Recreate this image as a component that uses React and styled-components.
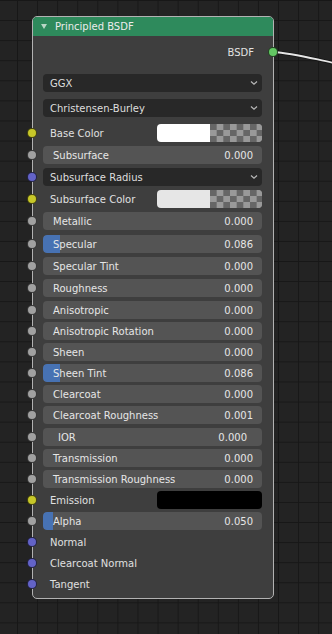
import React from "react";
import styled, { createGlobalStyle } from "styled-components";

const Global = createGlobalStyle`
  html, body { margin: 0; padding: 0; background: #232323; }
  body { font-family: "DejaVu Sans", "Liberation Sans", sans-serif; }
`;

const Canvas = styled.div`
  position: relative;
  width: 332px;
  height: 634px;
  overflow: hidden;
  box-sizing: border-box;
  padding: 16px 0 0 32px;
  background-color: #232323;
  background-image: linear-gradient(to right, #171717 1px, transparent 1px),
    linear-gradient(to bottom, #171717 1px, transparent 1px);
  background-size: 20.08px 20.08px;
  background-position: 17px 0;
`;

const Wire = styled.svg`
  position: absolute;
  left: 0;
  top: 0;
  width: 332px;
  height: 634px;
  pointer-events: none;
  z-index: 0;
`;

const Node = styled.div`
  position: relative;
  z-index: 1;
  width: 242px;
  box-sizing: border-box;
  border: 1px solid #b2b2b2;
  border-radius: 5px;
  background: #3e3e3e;
  padding-bottom: 5px;
  font-size: 10px;
  color: #e2e2e2;
`;

const Header = styled.div`
  height: 19px;
  display: flex;
  align-items: center;
  gap: 8px;
  padding-left: 8px;
  background: #2e8a5c;
  border-radius: 4px 4px 0 0;
  color: #ececec;
`;

const Body = styled.div`
  display: flex;
  flex-direction: column;
  padding: 5px 11px 0 10px;
`;

const OutputRow = styled.div`
  position: relative;
  height: 22px;
  display: flex;
  align-items: center;
  justify-content: flex-end;
  padding-right: 8px;
`;

const Socket = styled.span`
  position: absolute;
  top: calc(50% - 5px);
  ${(p) => (p.$out ? "right: -16px;" : "left: -16px;")}
  width: 10px;
  height: 10px;
  box-sizing: border-box;
  border-radius: 50%;
  border: 1px solid rgba(0, 0, 0, 0.65);
  background: ${(p) => p.$color};
`;

const Row = styled.div`
  position: relative;
  height: 18px;
  margin-top: ${(p) => p.$mt}px;
  display: flex;
  align-items: center;
`;

const Dropdown = styled.div`
  flex: 1;
  height: 18px;
  box-sizing: border-box;
  display: flex;
  align-items: center;
  justify-content: space-between;
  padding: 0 4px 0 7px;
  background: #282828;
  border-radius: 4px;
  color: #dedede;
`;

const Slider = styled.div`
  position: relative;
  flex: 1;
  height: 18px;
  box-sizing: border-box;
  display: flex;
  align-items: center;
  justify-content: space-between;
  padding: 0 ${(p) => (p.$inset ? 15 : 9)}px 0 ${(p) => (p.$inset ? 15 : 10)}px;
  background: #545454;
  border-radius: 4px;
  overflow: hidden;
  color: #e6e6e6;
`;

const Fill = styled.span`
  position: absolute;
  left: 0;
  top: 0;
  bottom: 0;
  background: #4772b3;
  border-radius: 4px 0 0 4px;
`;

const SliderText = styled.span`
  position: relative;
`;

const PlainLabel = styled.span`
  flex: 1;
  padding-left: 7px;
  color: #e0e0e0;
`;

const Swatch = styled.div`
  width: 105px;
  height: 18px;
  display: flex;
  border-radius: 4px;
  overflow: hidden;
`;

const SwatchColor = styled.span`
  flex: 1;
  background: ${(p) => p.$color};
`;

const SwatchAlpha = styled.span`
  width: 52px;
  background-color: #999999;
  background-image: conic-gradient(
    #999999 0 25%,
    #666666 0 50%,
    #999999 0 75%,
    #666666 0
  );
  background-size: 13.33px 12px;
`;

const Chevron = () => (
  <svg width="8" height="6" viewBox="0 0 8 6">
    <path d="M1 1.5 L4 4.3 L7 1.5" fill="none" stroke="#b8b8b8" strokeWidth="1.2" />
  </svg>
);

const Triangle = () => (
  <svg width="6" height="5" viewBox="0 0 6 5">
    <polygon points="0,0 6,0 3,5" fill="#b9d6c6" />
  </svg>
);

const SOCK = {
  yellow: "#c7c729",
  gray: "#a1a1a1",
  blue: "#6363c7",
  green: "#63c763",
};

const rows = [
  { type: "color", label: "Base Color", socket: "yellow", color: "#ffffff", alpha: true },
  { type: "slider", label: "Subsurface", value: "0.000", socket: "gray" },
  { type: "dropdown", label: "Subsurface Radius", socket: "blue" },
  { type: "color", label: "Subsurface Color", socket: "yellow", color: "#e6e6e6", alpha: true },
  { type: "slider", label: "Metallic", value: "0.000", socket: "gray" },
  { type: "slider", label: "Specular", value: "0.086", socket: "gray", fill: 0.086 },
  { type: "slider", label: "Specular Tint", value: "0.000", socket: "gray" },
  { type: "slider", label: "Roughness", value: "0.000", socket: "gray" },
  { type: "slider", label: "Anisotropic", value: "0.000", socket: "gray" },
  { type: "slider", label: "Anisotropic Rotation", value: "0.000", socket: "gray" },
  { type: "slider", label: "Sheen", value: "0.000", socket: "gray" },
  { type: "slider", label: "Sheen Tint", value: "0.086", socket: "gray", fill: 0.086 },
  { type: "slider", label: "Clearcoat", value: "0.000", socket: "gray" },
  { type: "slider", label: "Clearcoat Roughness", value: "0.001", socket: "gray" },
  { type: "slider", label: "IOR", value: "0.000", socket: "gray", inset: true },
  { type: "slider", label: "Transmission", value: "0.000", socket: "gray" },
  { type: "slider", label: "Transmission Roughness", value: "0.000", socket: "gray" },
  { type: "color", label: "Emission", socket: "yellow", color: "#000000" },
  { type: "slider", label: "Alpha", value: "0.050", socket: "gray", fill: 0.05 },
  { type: "plain", label: "Normal", socket: "blue" },
  { type: "plain", label: "Clearcoat Normal", socket: "blue" },
  { type: "plain", label: "Tangent", socket: "blue" },
];

const gapFor = (i) => (i === 0 ? 7 : i === 5 || i === 14 ? (i === 5 ? 5 : 4) : i <= 8 ? 4 : 3);

function RowContent({ r }) {
  if (r.type === "slider") {
    return (
      <Slider $inset={r.inset}>
        {r.fill ? <Fill style={{ width: Math.round(r.fill * 200) + "px" }} /> : null}
        <SliderText>{r.label}</SliderText>
        <SliderText>{r.value}</SliderText>
      </Slider>
    );
  }
  if (r.type === "dropdown") {
    return (
      <Dropdown>
        <span>{r.label}</span>
        <Chevron />
      </Dropdown>
    );
  }
  if (r.type === "color") {
    return (
      <>
        <PlainLabel>{r.label}</PlainLabel>
        <Swatch>
          <SwatchColor $color={r.color} />
          {r.alpha ? <SwatchAlpha /> : null}
        </Swatch>
      </>
    );
  }
  return <PlainLabel>{r.label}</PlainLabel>;
}

export default function App() {
  return (
    <>
      <Global />
      <Canvas>
        <Wire viewBox="0 0 332 634">
          <path d="M273 52 C 292 53, 312 58.5, 334 63" fill="none" stroke="#151515" strokeWidth="3.6" />
          <path d="M273 52 C 292 53, 312 58.5, 334 63" fill="none" stroke="#e6e6e6" strokeWidth="1.8" />
        </Wire>
        <Node>
          <Header>
            <Triangle />
            <span>Principled BSDF</span>
          </Header>
          <Body>
            <OutputRow>
              BSDF
              <Socket $out $color={SOCK.green} />
            </OutputRow>
            <Row $mt={11}>
              <Dropdown>
                <span>GGX</span>
                <Chevron />
              </Dropdown>
            </Row>
            <Row $mt={7}>
              <Dropdown>
                <span>Christensen-Burley</span>
                <Chevron />
              </Dropdown>
            </Row>
            {rows.map((r, i) => (
              <Row key={r.label} $mt={gapFor(i)}>
                <Socket $color={SOCK[r.socket]} />
                <RowContent r={r} />
              </Row>
            ))}
          </Body>
        </Node>
      </Canvas>
    </>
  );
}
